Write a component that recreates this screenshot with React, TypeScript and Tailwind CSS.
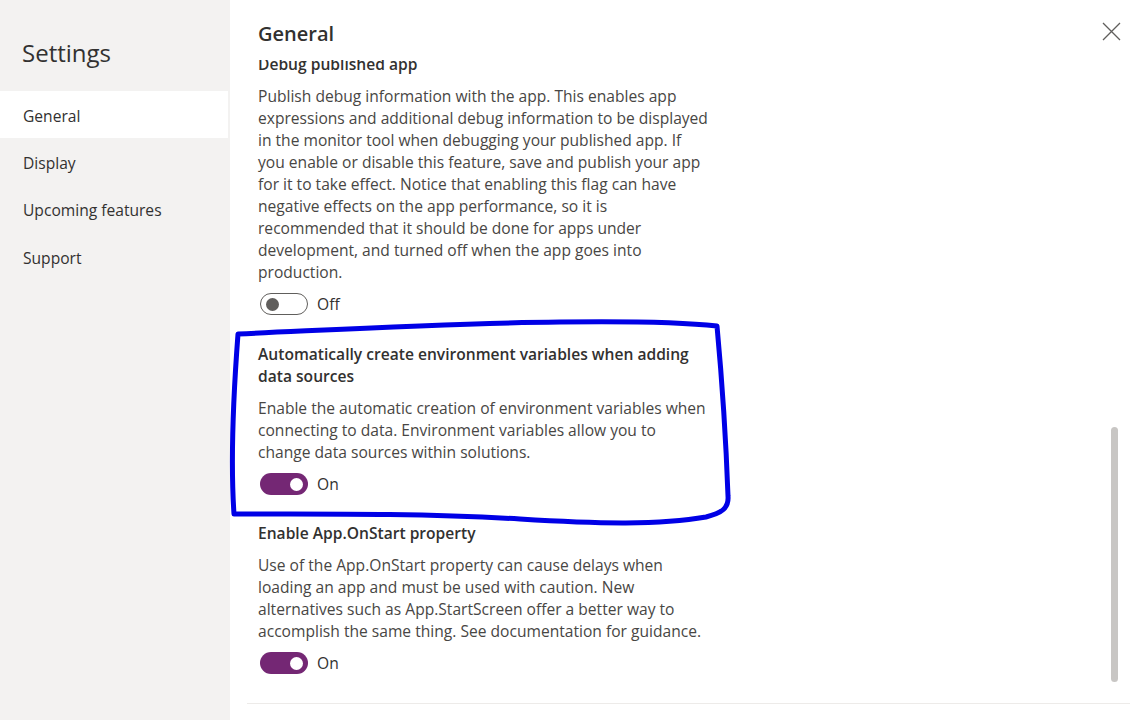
import React from "react";

type Setting = {
  title: string[];
  desc: string[];
  on: boolean;
};

const settings: Setting[] = [
  {
    title: ["Debug published app"],
    desc: [
      "Publish debug information with the app. This enables app",
      "expressions and additional debug information to be displayed",
      "in the monitor tool when debugging your published app. If",
      "you enable or disable this feature, save and publish your app",
      "for it to take effect. Notice that enabling this flag can have",
      "negative effects on the app performance, so it is",
      "recommended that it should be done for apps under",
      "development, and turned off when the app goes into",
      "production.",
    ],
    on: false,
  },
  {
    title: ["Automatically create environment variables when adding", "data sources"],
    desc: [
      "Enable the automatic creation of environment variables when",
      "connecting to data. Environment variables allow you to",
      "change data sources within solutions.",
    ],
    on: true,
  },
  {
    title: ["Enable App.OnStart property"],
    desc: [
      "Use of the App.OnStart property can cause delays when",
      "loading an app and must be used with caution. New",
      "alternatives such as App.StartScreen offer a better way to",
      "accomplish the same thing. See documentation for guidance.",
    ],
    on: true,
  },
];

const navItems = ["General", "Display", "Upcoming features", "Support"];

function Toggle({ on }: { on: boolean }) {
  return (
    <div className="flex items-center gap-[9px] pl-[2px]">
      {on ? (
        <div className="w-[48px] h-[22px] rounded-full bg-[#742774] flex items-center justify-end pr-[5px]">
          <div className="w-[13px] h-[13px] rounded-full bg-white" />
        </div>
      ) : (
        <div className="w-[48px] h-[22px] rounded-full border border-[#605e5c] bg-white flex items-center pl-[5px]">
          <div className="w-[13px] h-[13px] rounded-full bg-[#605e5c]" />
        </div>
      )}
      <span className="text-[15.6px] leading-[22px] text-[#323130]">{on ? "On" : "Off"}</span>
    </div>
  );
}

export default function App() {
  return (
    <div
      className="relative w-[1144px] h-[720px] flex overflow-hidden bg-white"
      style={{ fontFamily: '"Open Sans", "Noto Sans", sans-serif' }}
    >
      {/* sidebar */}
      <aside className="w-[230px] shrink-0 bg-[#f3f2f1] pt-[37px]">
        <h1 className="pl-[22px] text-[24px] leading-[32px] text-[#323130]">Settings</h1>
        <nav className="mt-[22px] pr-[2px]">
          {navItems.map((item, i) => (
            <div
              key={item}
              className={
                "h-[47.4px] flex items-center pl-[23px] pt-[3px] text-[15.6px] text-[#323130] " +
                (i === 0 ? "bg-white font-medium" : "")
              }
            >
              {item}
            </div>
          ))}
        </nav>
      </aside>

      {/* main */}
      <main className="flex-1 flex flex-col">
        <div className="flex items-start justify-between pl-[28px] pr-[23px] pt-[20px]">
          <h2 className="text-[20px] leading-[28px] font-semibold text-[#323130]">General</h2>
          <svg className="mt-[2px]" width="19" height="19" viewBox="0 0 19 19" fill="none" stroke="#605e5c" strokeWidth="1.3">
            <path d="M1 1L18 18M18 1L1 18" />
          </svg>
        </div>

        <div className="relative mt-[12px] flex-1 overflow-hidden">
          <div className="mt-[-7px] pl-[28px] flex flex-col">
            {settings.map((s, i) => (
              <section key={i} className={i === 0 ? "" : i === 1 ? "mt-[28px]" : "mt-[27px]"}>
                <div className="text-[15.6px] leading-[22px] font-semibold text-[#323130]">
                  {s.title.map((t) => (
                    <div key={t} className="whitespace-nowrap">{t}</div>
                  ))}
                </div>
                <div className="mt-[10px] text-[15.6px] leading-[22px] text-[#484644]">
                  {s.desc.map((t) => (
                    <div key={t} className="whitespace-nowrap">{t}</div>
                  ))}
                </div>
                <div className="mt-[10px]">
                  <Toggle on={s.on} />
                </div>
              </section>
            ))}
          </div>
          {/* overlay scrollbar */}
          <div className="absolute right-[26px] top-[367px] w-[7px] h-[255px] rounded-full bg-[#c8c6c4]" />
        </div>

        <div className="ml-[17px] mr-[14px] border-t border-[#edebe9] h-[17px]" />
      </main>

      {/* hand-drawn annotation */}
      <svg className="absolute inset-0 pointer-events-none" width="1144" height="720" viewBox="0 0 1144 720" fill="none">
        <path
          d="M238 334 C 330 330, 450 323, 560 322 C 640 321, 690 323, 717 326 C 722 380, 726 440, 728 496 C 729 508, 722 513, 706 517 C 660 525, 600 524, 520 519 C 420 513, 320 514, 234 514 C 231 470, 233 400, 238 334 Z"
          stroke="#0000e6"
          strokeWidth="5"
          strokeLinejoin="round"
        />
      </svg>
    </div>
  );
}
